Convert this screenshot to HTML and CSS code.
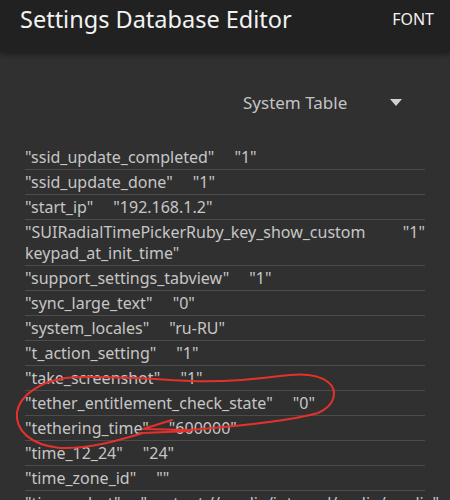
FILE: index.html
```html
<!DOCTYPE html>
<html>
<head>
<meta charset="utf-8">
<link rel="stylesheet" href="styles.css">
</head>
<body>
<div class="app">
  <header class="bar">
    <h1 class="title">Settings Database Editor</h1>
    <span class="action">FONT</span>
  </header>
  <div class="spinner-row">
    <div class="spinner">
      <span class="spinner-label">System Table</span>
      <svg class="caret" width="12" height="7" viewBox="0 0 12 7"><path d="M0 0H12L6 7Z" fill="#d0d0d0"/></svg>
    </div>
  </div>
  <div class="list">
    <div class="row"><span class="key">"ssid_update_completed"</span><span class="val">"1"</span></div>
    <div class="row"><span class="key">"ssid_update_done"</span><span class="val">"1"</span></div>
    <div class="row"><span class="key">"start_ip"</span><span class="val">"192.168.1.2"</span></div>
    <div class="row row-wrap"><span class="key">"SUIRadialTimePickerRuby_key_show_custom keypad_at_init_time"</span><span class="val">"1"</span></div>
    <div class="row"><span class="key">"support_settings_tabview"</span><span class="val">"1"</span></div>
    <div class="row"><span class="key">"sync_large_text"</span><span class="val">"0"</span></div>
    <div class="row"><span class="key">"system_locales"</span><span class="val">"ru-RU"</span></div>
    <div class="row"><span class="key">"t_action_setting"</span><span class="val">"1"</span></div>
    <div class="row"><span class="key">"take_screenshot"</span><span class="val">"1"</span></div>
    <div class="row"><span class="key">"tether_entitlement_check_state"</span><span class="val">"0"</span></div>
    <div class="row"><span class="key">"tethering_time"</span><span class="val">"600000"</span></div>
    <div class="row"><span class="key">"time_12_24"</span><span class="val">"24"</span></div>
    <div class="row"><span class="key">"time_zone_id"</span><span class="val">""</span></div>
    <div class="row"><span class="key">"timer_alert"</span><span class="val">"content://media/internal/audio/media"</span></div>
  </div>
  <svg class="scribble" width="450" height="500" viewBox="0 0 450 500">
    <path d="M172,420 L143,429 L190,430 C240,426 290,421 318,413 C336,405 338,390 328,382 C318,374 300,373 280,376 C250,380 220,382 190,381 C150,379 100,375 65,378 C40,382 20,395 17,412 C15,430 30,445 60,448 C90,449 120,440 143,433 L190,431" fill="none" stroke="#e5312b" stroke-width="2" stroke-linecap="round" stroke-linejoin="round"/>
  </svg>
</div>
</body>
</html>
```

FILE: styles.css
```css
html, body {
  margin: 0;
  padding: 0;
  background: #303030;
}
.app {
  position: relative;
  width: 450px;
  height: 500px;
  overflow: hidden;
  background: #303030;
  font-family: "Noto Sans", "Open Sans", sans-serif;
}
.bar {
  height: 52px;
  background: #212121;
  display: flex;
  align-items: center;
  justify-content: space-between;
  padding: 0 16px 0 20px;
  box-shadow: 0 2px 6px rgba(0,0,0,0.45);
  position: relative;
  z-index: 1;
}
.title {
  margin: 0;
  margin-top: -14px;
  font-size: 23.5px;
  font-weight: 400;
  color: #f2f2f2;
}
.action {
  margin-top: -14px;
  font-size: 16px;
  color: #f2f2f2;
}
.spinner-row {
  height: 93px;
  display: flex;
  justify-content: flex-end;
  align-items: flex-start;
}
.spinner {
  margin-top: 39px;
  width: 159px;
  margin-right: 48px;
  display: flex;
  align-items: center;
  justify-content: space-between;
  font-size: 17px;
  color: #c4c4c4;
}
.caret {
  display: block;
}
.list {
  margin: 0 25px;
}
.row {
  display: flex;
  gap: 20px;
  padding: 2px 0 1px;
  line-height: 21px;
  font-size: 16px;
  color: #c6c6c6;
  border-bottom: 1px solid #4c4c4c;
  white-space: nowrap;
}
.row-wrap .key {
  white-space: normal;
}
.key {
  flex: 0 1 auto;
}
.val {
  flex: none;
}
.scribble {
  position: absolute;
  left: 0;
  top: 0;
  pointer-events: none;
}
```
